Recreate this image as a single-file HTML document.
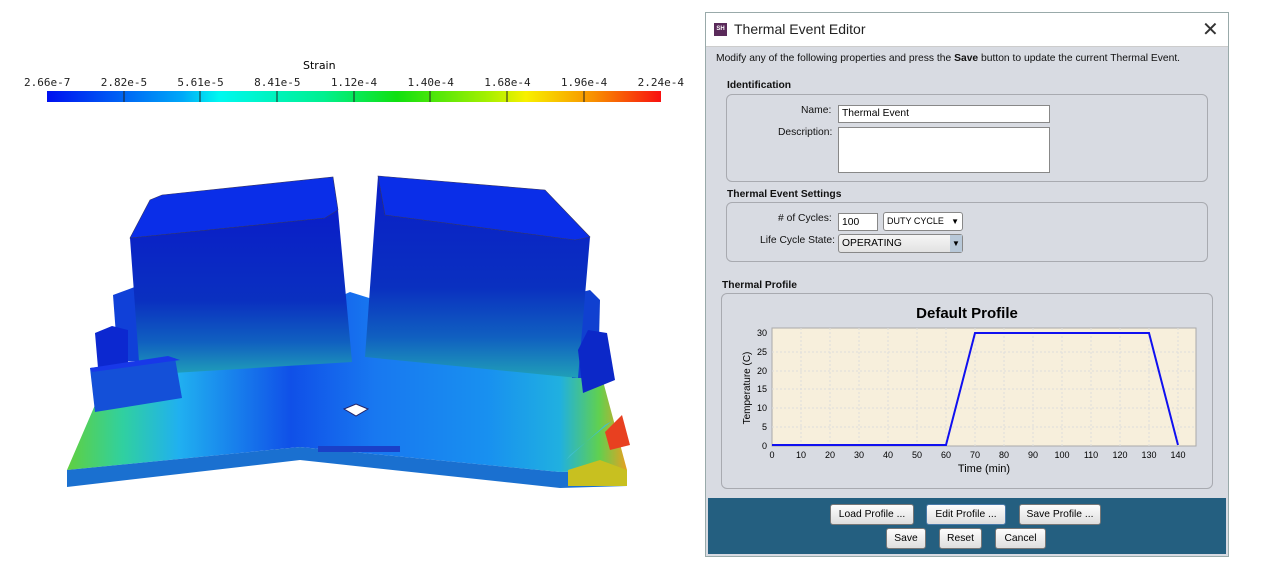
<!DOCTYPE html>
<html><head><style>
body{margin:0;width:1280px;height:567px;background:#fff;position:relative;overflow:hidden;font-family:"Liberation Sans",sans-serif}
.abs{position:absolute}
.lbl{font-family:"DejaVu Sans Mono","Liberation Mono",monospace;font-size:11px;color:#222}
.dlg{left:705px;top:12px;width:522px;height:543px;border:1px solid #9aa;background:#d8dbe2}
.tb{left:0;top:0;width:522px;height:33px;background:#fff;border-bottom:1px solid #ccc}
.grp{border:1px solid #a8aab0;border-radius:6px;background:#d8dbe2}
.t{font-size:10.3px;color:#111;font-family:"Liberation Sans",sans-serif;white-space:nowrap}
.b{font-weight:bold}
.inp{background:#fff;border:1px solid #888;font-size:10.3px;padding-left:3px;box-sizing:border-box;font-family:"Liberation Sans",sans-serif}
.btn{background:linear-gradient(#fdfdfd,#dedede);border:1px solid #777;border-radius:3px;font-size:10.3px;text-align:center;box-sizing:border-box;line-height:19px;font-family:"Liberation Sans",sans-serif}
</style></head><body>
<div class="abs" style="left:303px;top:59px;font-size:11px;font-family:'DejaVu Sans',sans-serif">Strain</div>
<div class="abs lbl" style="left:24px;top:76px;width:660px;display:flex;justify-content:space-between"><span>2.66e-7</span><span>2.82e-5</span><span>5.61e-5</span><span>8.41e-5</span><span>1.12e-4</span><span>1.40e-4</span><span>1.68e-4</span><span>1.96e-4</span><span>2.24e-4</span></div>
<div class="abs" style="left:47px;top:91px;width:614px;height:11px;background:linear-gradient(90deg,#0010f0,#00a8f8 22%,#00f8f0 28%,#00f090 45%,#10e010 57%,#a8f000 72%,#f8f000 78%,#f89000 89%,#f81010)"></div>
<svg class="abs" style="left:47px;top:91px" width="614" height="11"><g stroke="#222" stroke-width="1"><line x1="77" y1="0" x2="77" y2="11"/><line x1="153" y1="0" x2="153" y2="11"/><line x1="230" y1="0" x2="230" y2="11"/><line x1="307" y1="0" x2="307" y2="11"/><line x1="383" y1="0" x2="383" y2="11"/><line x1="460" y1="0" x2="460" y2="11"/><line x1="537" y1="0" x2="537" y2="11"/></g></svg>

<svg class="abs" style="left:0;top:0" width="700" height="567">
<defs>
<linearGradient id="pl" x1="0" y1="0" x2="1" y2="0"><stop offset="0" stop-color="#60d040"/><stop offset=".1" stop-color="#30d0a0"/><stop offset=".2" stop-color="#20b0f0"/><stop offset=".4" stop-color="#1050e8"/><stop offset=".55" stop-color="#1878f0"/><stop offset=".75" stop-color="#1890f0"/><stop offset=".88" stop-color="#20b0e0"/><stop offset=".95" stop-color="#60d050"/><stop offset="1" stop-color="#e8a020"/></linearGradient>
<linearGradient id="bx" x1="0" y1="0" x2="0" y2="1"><stop offset="0" stop-color="#0a1ec8"/><stop offset=".55" stop-color="#0a30c0"/><stop offset=".8" stop-color="#1060c0"/><stop offset="1" stop-color="#20a0b8"/></linearGradient>
</defs>
<polygon points="67,470 95,405 350,292 600,370 627,470 560,472 300,447" fill="url(#pl)"/>
<polygon points="67,470 300,447 560,472 627,470 627,486 560,488 300,460 67,487" fill="#1a70d0"/>
<polygon points="113,295 140,285 155,290 158,360 118,362" fill="#1040d8"/>
<polygon points="570,295 590,290 600,300 598,378 572,378" fill="#1040d0"/>
<polygon points="130,238 325,218 338,210 352,362 140,375" fill="url(#bx)"/>
<polygon points="130,238 150,200 162,195 333,177 338,210 325,218" fill="#0a2ee8" stroke="#336" stroke-width=".6"/>
<polygon points="378,176 385,215 575,240 590,237 578,378 365,357" fill="url(#bx)"/>
<polygon points="378,176 545,190 590,237 575,240 385,215" fill="#0a2ee8" stroke="#336" stroke-width=".6"/>
<polygon points="95,333 112,326 128,330 128,370 98,368" fill="#0c28d0"/>
<polygon points="90,368 175,358 182,398 95,412" fill="#1450d8"/>
<polygon points="90,368 168,356 180,360 92,372" fill="#1838e8"/>
<polygon points="588,330 607,333 615,380 583,393 578,350" fill="#0c28c8"/>
<polygon points="344,409 356,404 368,409 356,416" fill="#fff" stroke="#226" stroke-width="1"/>
<polygon points="318,446 400,446 400,452 318,452" fill="#1a40c8"/>
<polygon points="605,425 612,421 570,455 566,460" fill="#40c0d0"/>
<polygon points="605,432 622,415 630,445 610,450" fill="#e84020"/>
<polygon points="568,470 600,460 627,470 627,486 568,486" fill="#c8c020"/>
</svg>

<div class="abs dlg">
 <div class="abs tb">
  <div class="abs" style="left:8px;top:10px;width:13px;height:13px;background:#5a2a5a;color:#fff;font-size:6px;font-weight:bold;text-align:center;line-height:13px">SH</div>
  <div class="abs" style="left:28px;top:8px;font-size:14px;color:#222">Thermal Event Editor</div>
  <div class="abs" style="left:496px;top:4px;font-size:20px;color:#333">✕</div>
 </div>
 <div class="abs t" style="left:10px;top:40px">Modify any of the following properties and press the <b>Save</b> button to update the current Thermal Event.</div>
 <div class="abs t b" style="left:21px;top:67px">Identification</div>
 <div class="abs grp" style="left:20px;top:81px;width:480px;height:86px"></div>
 <div class="abs t" style="left:95px;top:92px">Name:</div>
 <div class="abs inp" style="left:132px;top:92px;width:212px;height:18px;line-height:16px">Thermal Event</div>
 <div class="abs t" style="left:72px;top:114px">Description:</div>
 <div class="abs inp" style="left:132px;top:114px;width:212px;height:46px"></div>
 <div class="abs t b" style="left:21px;top:176px">Thermal Event Settings</div>
 <div class="abs grp" style="left:20px;top:189px;width:480px;height:58px"></div>
 <div class="abs t" style="left:72px;top:200px"># of Cycles:</div>
 <div class="abs inp" style="left:132px;top:200px;width:40px;height:18px;line-height:17px">100</div>
 <div class="abs inp" style="left:177px;top:199px;width:80px;height:19px;border-radius:3px;font-size:9px;line-height:17px">DUTY CYCLE<span style="float:right;padding-right:3px;font-size:8px">▼</span></div>
 <div class="abs t" style="left:54px;top:222px">Life Cycle State:</div>
 <div class="abs inp" style="left:132px;top:221px;width:125px;height:19px;border-radius:3px;line-height:17px;background:linear-gradient(#f6f6f6,#e2e2e2)">OPERATING<span style="float:right;width:12px;text-align:center;font-size:8px;background:#b8c8d8">▼</span></div>
 <div class="abs t b" style="left:16px;top:267px">Thermal Profile</div>
 <div class="abs grp" style="left:15px;top:280px;width:490px;height:194px"></div>
 <svg class="abs" style="left:0;top:280px" width="522" height="200">
  <text x="261" y="25" text-anchor="middle" font-size="15" font-weight="bold" font-family="Liberation Sans">Default Profile</text>
  <rect x="66" y="35" width="424" height="118" fill="#f7efdc" stroke="#aaa"/>
  <g stroke="#ddd" stroke-dasharray="2,2"><line x1="95" y1="35" x2="95" y2="153"/><line x1="124" y1="35" x2="124" y2="153"/><line x1="153" y1="35" x2="153" y2="153"/><line x1="182" y1="35" x2="182" y2="153"/><line x1="211" y1="35" x2="211" y2="153"/><line x1="240" y1="35" x2="240" y2="153"/><line x1="269" y1="35" x2="269" y2="153"/><line x1="298" y1="35" x2="298" y2="153"/><line x1="327" y1="35" x2="327" y2="153"/><line x1="356" y1="35" x2="356" y2="153"/><line x1="385" y1="35" x2="385" y2="153"/><line x1="414" y1="35" x2="414" y2="153"/><line x1="443" y1="35" x2="443" y2="153"/><line x1="472" y1="35" x2="472" y2="153"/><line x1="66" y1="59" x2="490" y2="59"/><line x1="66" y1="78" x2="490" y2="78"/><line x1="66" y1="96" x2="490" y2="96"/><line x1="66" y1="115" x2="490" y2="115"/><line x1="66" y1="134" x2="490" y2="134"/></g>
  <polyline points="66,152 240,152 269,40 443,40 472,152" fill="none" stroke="#1010f0" stroke-width="2"/>
  <g font-size="9" font-family="Liberation Sans" text-anchor="end"><text x="61" y="43">30</text><text x="61" y="62">25</text><text x="61" y="81">20</text><text x="61" y="99">15</text><text x="61" y="118">10</text><text x="61" y="137">5</text><text x="61" y="156">0</text></g>
  <g font-size="9" font-family="Liberation Sans" text-anchor="middle"><text x="66" y="165">0</text><text x="95" y="165">10</text><text x="124" y="165">20</text><text x="153" y="165">30</text><text x="182" y="165">40</text><text x="211" y="165">50</text><text x="240" y="165">60</text><text x="269" y="165">70</text><text x="298" y="165">80</text><text x="327" y="165">90</text><text x="356" y="165">100</text><text x="385" y="165">110</text><text x="414" y="165">120</text><text x="443" y="165">130</text><text x="472" y="165">140</text></g>
  <text x="278" y="179" text-anchor="middle" font-size="11" font-family="Liberation Sans">Time (min)</text>
  <text transform="translate(44,95) rotate(-90)" text-anchor="middle" font-size="10" font-family="Liberation Sans">Temperature (C)</text>
 </svg>
 <div class="abs" style="left:2px;top:485px;width:518px;height:56px;background:#245f80"></div>
 <div class="abs btn" style="left:124px;top:491px;width:84px;height:21px">Load Profile ...</div>
 <div class="abs btn" style="left:220px;top:491px;width:80px;height:21px;border-color:#4a7aa8">Edit Profile ...</div>
 <div class="abs btn" style="left:313px;top:491px;width:82px;height:21px">Save Profile ...</div>
 <div class="abs btn" style="left:180px;top:515px;width:40px;height:21px">Save</div>
 <div class="abs btn" style="left:233px;top:515px;width:43px;height:21px">Reset</div>
 <div class="abs btn" style="left:289px;top:515px;width:51px;height:21px">Cancel</div>
</div>
</body></html>
